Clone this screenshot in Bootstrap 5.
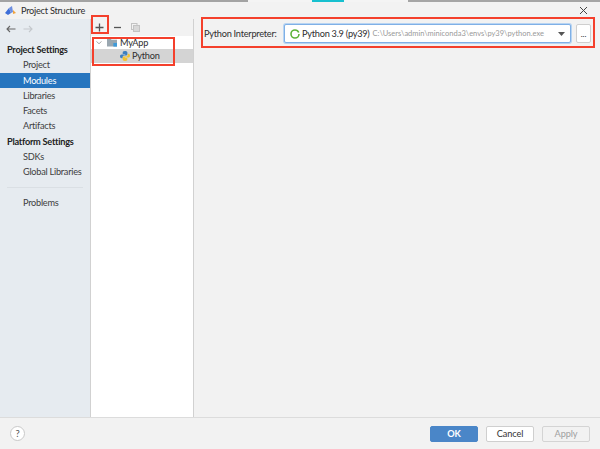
<!DOCTYPE html>
<html lang="en">
<head>
<meta charset="utf-8">
<title>Project Structure</title>
<link href="https://cdn.jsdelivr.net/npm/bootstrap@5.3.0/dist/css/bootstrap.min.css" rel="stylesheet">
<style>
html,body{height:449px;overflow:hidden}
body{font-family:"Lato","Noto Sans",sans-serif;font-size:9.200px;letter-spacing:-.25px;color:#2e2e2e;background:#f2f2f2;line-height:1.2;white-space:nowrap}
.dlg{height:449px;position:relative}
.topstrip{height:2px;background:linear-gradient(90deg,#a3a3a3 0,#a3a3a3 248px,#f4f4f4 248px,#f4f4f4 312px,#17c0cf 312px,#17c0cf 344px,#f4f4f4 344px,#f4f4f4 408px,#a5a5a5 408px)}
.titlebar{height:17px;padding-left:5px}
.titletext{margin-left:4px}
.closex{margin-right:12px}
.mainarea{height:398px}
.sidepane{width:91px;background:#e6ebf0;border-right:1px solid #d1d1d1}
.navarrows{height:23px;padding:6px 0 0 6px;gap:7px}
.grp{font-weight:700;color:#222;height:15.250px;padding-left:7px}
.itm{height:15.250px;padding-left:23px;color:#404040}
.itm.sel{background:#2675bf;color:#fff}
.sep{height:1px;background:#dadfe4;margin:7.500px 7px 7px}
.midpane{width:103px;border-right:1px solid #d1d1d1;background:#fff}
.midtools{height:17px;background:#f2f2f2;padding-left:4px;gap:9px}
.tree{height:13px;padding-left:5px}
.tree.sel{height:14px;background:#d4d4d4;padding-left:29px}
.chev{margin-right:5px}
.folderic{margin-right:3px}
.pyic{margin-right:2px}
.rightpane{background:#f2f2f2;padding:5px 0 0 10px}
.lbl{width:80px}
.combo{width:287px;height:19px;background:#fff;border:1px solid #7fb0e6;box-shadow:0 0 0 1px #b8d4f2;border-radius:2px;padding:0 5px}
.pathtxt{font-size:7.500px;letter-spacing:0;color:#999;margin-left:3px}
.dots{width:15px;height:19px;margin-left:5px;background:#fff;border:1px solid #cfcfcf;border-radius:2px;font-size:8px;padding:0}
.footerbar{height:32px;border-top:1px solid #dcdcdc;padding:0 0 0 10px}
.helpb{width:15px;height:15px;border-radius:50%;border:1px solid #c9c9c9;background:#fff;font-size:9.500px;color:#555}
.fbtn{width:48px;height:16px;border-radius:2px;font-size:9.200px;padding:0;line-height:14px;letter-spacing:-.1px}
.okb{background:#4a86c8;border:1px solid #4a86c8;color:#fff;font-weight:700}
.cancelb{background:#fff;border:1px solid #cfcfcf;color:#333;margin-left:8px}
.applyb{background:#f2f2f2;border:1px solid #d4d4d4;color:#a0a0a0;margin-left:8px;margin-right:10px}
.redbox{position:absolute;border:2px solid #f4402c;pointer-events:none}
.rb1{left:91px;top:15px;width:18px;height:19px}
.rb2{left:92px;top:37px;width:83px;height:29px}
.rb3{left:201px;top:17px;width:394px;height:31px}
</style>
</head>
<body>
<div class="dlg d-flex flex-column">
  <div class="topstrip"></div>
  <div class="titlebar d-flex align-items-center">
    <svg width="12" height="10" viewBox="0 0 12 10"><path d="M0 7 4 2 6 7 3 9Z" fill="#3f6fd8"/><path d="M4 2 7 0 8 6 6 7Z" fill="#6d8ee0"/><path d="M8 4 11 7 8 8Z" fill="#f0a23c"/></svg>
    <span class="titletext">Project Structure</span>
    <svg class="ms-auto closex" width="9" height="9" viewBox="0 0 9 9"><path d="M1 1 8 8M8 1 1 8" stroke="#444" stroke-width="1"/></svg>
  </div>
  <div class="mainarea d-flex">
    <div class="sidepane flex-shrink-0">
      <div class="navarrows d-flex align-items-start">
        <svg width="10" height="8" viewBox="0 0 10 8"><path d="M9.500 4H1M4 1 1 4 4 7" fill="none" stroke="#666" stroke-width="1.100"/></svg>
        <svg width="10" height="8" viewBox="0 0 10 8"><path d="M.5 4H9M6 1 9 4 6 7" fill="none" stroke="#c4c8cc" stroke-width="1.100"/></svg>
      </div>
      <div class="grp d-flex align-items-center">Project Settings</div>
      <div class="itm d-flex align-items-center">Project</div>
      <div class="itm sel d-flex align-items-center">Modules</div>
      <div class="itm d-flex align-items-center">Libraries</div>
      <div class="itm d-flex align-items-center">Facets</div>
      <div class="itm d-flex align-items-center">Artifacts</div>
      <div class="grp d-flex align-items-center">Platform Settings</div>
      <div class="itm d-flex align-items-center">SDKs</div>
      <div class="itm d-flex align-items-center">Global Libraries</div>
      <div class="sep"></div>
      <div class="itm d-flex align-items-center">Problems</div>
    </div>
    <div class="midpane flex-shrink-0">
      <div class="midtools d-flex align-items-center">
        <svg width="9" height="9" viewBox="0 0 9 9"><path d="M4.500 .5V8.500M.5 4.500H8.500" stroke="#555" stroke-width="1.300"/></svg>
        <svg width="9" height="9" viewBox="0 0 9 9"><path d="M1 4.500H8" stroke="#555" stroke-width="1.300"/></svg>
        <svg width="9" height="9" viewBox="0 0 9 9"><rect x=".5" y=".5" width="5.500" height="6" fill="none" stroke="#c3c3c3"/><rect x="2.500" y="2.500" width="6" height="6" fill="#d8d8d8" stroke="#c3c3c3"/></svg>
      </div>
      <div class="tree d-flex align-items-center">
        <svg width="6" height="4" viewBox="0 0 7 5" class="chev"><path d="M.5 .5 3.500 3.500 6.500 .5" fill="none" stroke="#888"/></svg>
        <svg width="10" height="9" viewBox="0 0 11 9" class="folderic"><path d="M0 0H4L5 1.500H11V9H0Z" fill="#9aa7b0"/><rect x="7" y="5" width="4" height="4" fill="#3d9ad9"/></svg>
        <span>MyApp</span>
      </div>
      <div class="tree sel d-flex align-items-center">
        <svg width="10" height="10" viewBox="0 0 10 10" class="pyic"><path d="M5 0C3 0 2.700 .8 2.700 1.700V3H5.200V3.500H1.700C.6 3.500 0 4.200 0 5.300S.6 7.300 1.700 7.300H2.700V6C2.700 5 3.500 4.500 4.300 4.500H6.300C7 4.500 7.400 4 7.400 3.300V1.700C7.400 .7 6.500 0 5 0Z" fill="#3d7fc0"/><path d="M5 10C7 10 7.300 9.200 7.300 8.300V7H4.800V6.500H8.300C9.400 6.500 10 5.800 10 4.700S9.400 2.700 8.300 2.700H7.700V4C7.700 5 6.900 5.500 6 5.500H3.700C3 5.500 2.700 6 2.700 6.700V8.300C2.700 9.300 3.500 10 5 10Z" fill="#f2c230"/></svg>
        <span>Python</span>
      </div>
    </div>
    <div class="rightpane flex-grow-1">
      <div class="d-flex align-items-center">
        <span class="lbl">Python Interpreter:</span>
        <div class="combo d-flex align-items-center">
          <svg width="10" height="10" viewBox="0 0 10 10" class="pyic"><circle cx="5" cy="5" r="4" fill="none" stroke="#5cb338" stroke-width="1.600" stroke-dasharray="23 2"/></svg>
          <span>Python 3.9 (py39)</span>
          <span class="pathtxt">C:\Users\admin\miniconda3\envs\py39\python.exe</span>
          <svg class="ms-auto" width="7" height="4" viewBox="0 0 7 4"><path d="M0 0H7L3.500 4Z" fill="#555"/></svg>
        </div>
        <button type="button" class="dots btn">...</button>
      </div>
    </div>
  </div>
  <div class="footerbar d-flex align-items-center">
    <div class="helpb d-flex align-items-center justify-content-center">?</div>
    <button type="button" class="fbtn okb btn ms-auto">OK</button>
    <button type="button" class="fbtn cancelb btn">Cancel</button>
    <button type="button" class="fbtn applyb btn">Apply</button>
  </div>
  <div class="redbox rb1"></div>
  <div class="redbox rb2"></div>
  <div class="redbox rb3"></div>
</div>
<script src="https://cdn.jsdelivr.net/npm/bootstrap@5.3.0/dist/js/bootstrap.bundle.min.js"></script>
</body>
</html>
